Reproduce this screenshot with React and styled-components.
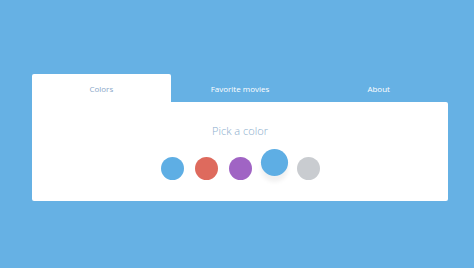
import React, { useState } from "react";
import styled, { createGlobalStyle } from "styled-components";

const GlobalStyle = createGlobalStyle`
  html, body {
    margin: 0;
    padding: 0;
    background: #66b1e4;
    font-family: 'Open Sans', 'Liberation Sans', sans-serif;
  }
`;

const Page = styled.div`
  width: 474px;
  height: 268px;
  padding: 74px 26px 0 32px;
  box-sizing: border-box;
`;

const Tabs = styled.div`
  display: grid;
  grid-template-columns: repeat(3, 1fr);
  height: 28px;
`;

const Tab = styled.div`
  display: flex;
  align-items: center;
  justify-content: center;
  font-size: 8px;
  font-weight: 400;
  color: ${(p) => (p.active ? "#8aa7c9" : "#ffffff")};
  background: ${(p) => (p.active ? "#ffffff" : "transparent")};
  border-radius: 2px 2px 0 0;
  cursor: pointer;
`;

const Panel = styled.div`
  background: #ffffff;
  height: 99px;
  border-radius: 0 2px 2px 2px;
  display: flex;
  flex-direction: column;
  align-items: center;
  padding-top: 21px;
  box-sizing: border-box;
`;

const Title = styled.div`
  font-size: 11px;
  font-weight: 300;
  color: #88abcc;
  line-height: 15px;
`;

const Swatches = styled.div`
  display: flex;
  gap: 11px;
  margin-top: 19px;
`;

const Swatch = styled.div`
  width: 23px;
  height: 23px;
  border-radius: 50%;
  background: ${(p) => p.color};
  transform: ${(p) => (p.selected ? "translateY(-6px) scale(1.18)" : "none")};
  box-shadow: ${(p) =>
    p.selected ? "0 5px 4px rgba(0, 0, 0, 0.06)" : "none"};
`;

const colors = ["#5eaee4", "#de6a5d", "#a064c4", "#5eaee4", "#c9ccd0"];

export default function App() {
  const [tab, setTab] = useState(0);
  return (
    <>
      <GlobalStyle />
      <Page>
        <Tabs>
          {["Colors", "Favorite movies", "About"].map((t, i) => (
            <Tab key={t} active={i === tab} onClick={() => setTab(i)}>
              {t}
            </Tab>
          ))}
        </Tabs>
        <Panel>
          <Title>Pick a color</Title>
          <Swatches>
            {colors.map((c, i) => (
              <Swatch key={i} color={c} selected={i === 3} />
            ))}
          </Swatches>
        </Panel>
      </Page>
    </>
  );
}
